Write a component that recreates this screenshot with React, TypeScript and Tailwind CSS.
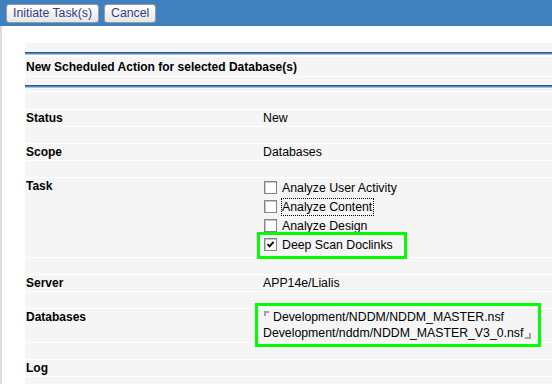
import React from 'react';

const font = { fontFamily: '"Liberation Sans", Arial, sans-serif' };

const BlueRule = () => (
  <div>
    <div className="h-px bg-[#2c5b8c]" />
    <div className="h-px bg-[#4f86be]" />
    <div className="h-px bg-[#a7c6e6]" />
  </div>
);

const Row: React.FC<{ label?: string; h: string; children?: React.ReactNode }> = ({ label, h, children }) => (
  <div className={`flex border-t border-white ${h}`}>
    <div className="w-[238px] shrink-0 pl-px text-[12px] leading-4 font-bold text-black">{label}</div>
    <div className="flex-1 text-[12.3px] leading-4 text-black">{children}</div>
  </div>
);

const Check: React.FC<{ checked?: boolean }> = ({ checked }) => (
  <span className="inline-flex w-[13px] h-[13px] shrink-0 items-center justify-center border border-[#858585] bg-white shadow-[inset_1px_1px_0_#c8c8c8]">
    {checked && (
      <svg width="9" height="9" viewBox="0 0 9 9">
        <path d="M1.5 4.2 L3.6 6.4 L7.6 1.8" fill="none" stroke="#000" strokeWidth="1.8" />
      </svg>
    )}
  </span>
);

const tasks = ['Analyze User Activity', 'Analyze Content', 'Analyze Design', 'Deep Scan Doclinks'];

export default function App() {
  return (
    <div className="w-[552px] h-[384px] overflow-hidden bg-white" style={font}>
      {/* toolbar */}
      <div className="h-[26px] bg-[#4080bf] flex items-center gap-[5px] pl-[6px]">
        <button className="h-[19px] px-[6px] text-[12.3px] leading-none text-[#3b3b82] bg-gradient-to-b from-white to-[#e6e6e6] border border-[#9a9a9a] rounded-[3px]">
          Initiate Task(s)
        </button>
        <button className="h-[19px] px-[6px] text-[12.3px] leading-none text-[#3b3b82] bg-gradient-to-b from-white to-[#e6e6e6] border border-[#9a9a9a] rounded-[3px]">
          Cancel
        </button>
      </div>

      <div className="h-[358px] border-l-2 border-[#dcdcdc] pl-[23px] pt-[17px]">
        <div className="bg-[#f5f5f5] h-full">
          <div className="h-[9px]" />
          <BlueRule />
          <div className="h-[2px] bg-white" />
          <div className="h-[19px] flex items-center pl-px text-[12px] font-bold text-black">
            New Scheduled Action for selected Database(s)
          </div>
          <div className="h-px bg-white" />
          <div className="h-[8px]" />
          <BlueRule />
          <div className="h-[3px]" />
          <div className="h-[18px] border-t border-white" />

          <Row label="Status" h="h-[17px]">New</Row>
          <Row h="h-[17px]" />
          <Row label="Scope" h="h-[17px]">Databases</Row>
          <Row h="h-[17px]" />
          <Row label="Task" h="h-[80px]">
            <div className="flex flex-col pl-px">
              {tasks.map((t, i) => (
                <div key={t} className="relative h-[19px] flex items-center gap-[5px]">
                  <Check checked={i === 3} />
                  {i === 1 ? (
                    <span className="border border-dotted border-black h-[18px] leading-4 -ml-px pr-px">{t}</span>
                  ) : (
                    <span>{t}</span>
                  )}
                  {i === 3 && (
                    <span className="absolute left-[-7px] top-[-3px] w-[150px] h-[27px] border-[3px] border-[#00ff00]" />
                  )}
                </div>
              ))}
            </div>
          </Row>
          <Row h="h-[17px]" />
          <Row label="Server" h="h-[17px]">APP14e/Lialis</Row>
          <Row h="h-[17px]" />
          <Row label="Databases" h="h-[34px]">
            <div className="relative">
              <div className="flex items-start">
                <span className="mt-[2px] ml-px mr-[4px] w-[5px] h-[5px] border-l-2 border-t-2 border-[#a3a3a3]" />
                <span>Development/NDDM/NDDM_MASTER.nsf</span>
              </div>
              <div className="flex items-end">
                <span>Development/nddm/NDDM_MASTER_V3_0.nsf</span>
                <span className="mb-[2px] ml-[2px] w-[6px] h-[6px] border-r-2 border-b-2 border-[#a3a3a3]" />
              </div>
              <span className="absolute left-[-8px] top-[-6px] w-[286px] h-[44px] border-[3px] border-[#00ff00]" />
            </div>
          </Row>
          <Row h="h-[17px]" />
          <Row label="Log" h="h-[17px]" />
          <Row h="h-[17px]" />
        </div>
      </div>
    </div>
  );
}
